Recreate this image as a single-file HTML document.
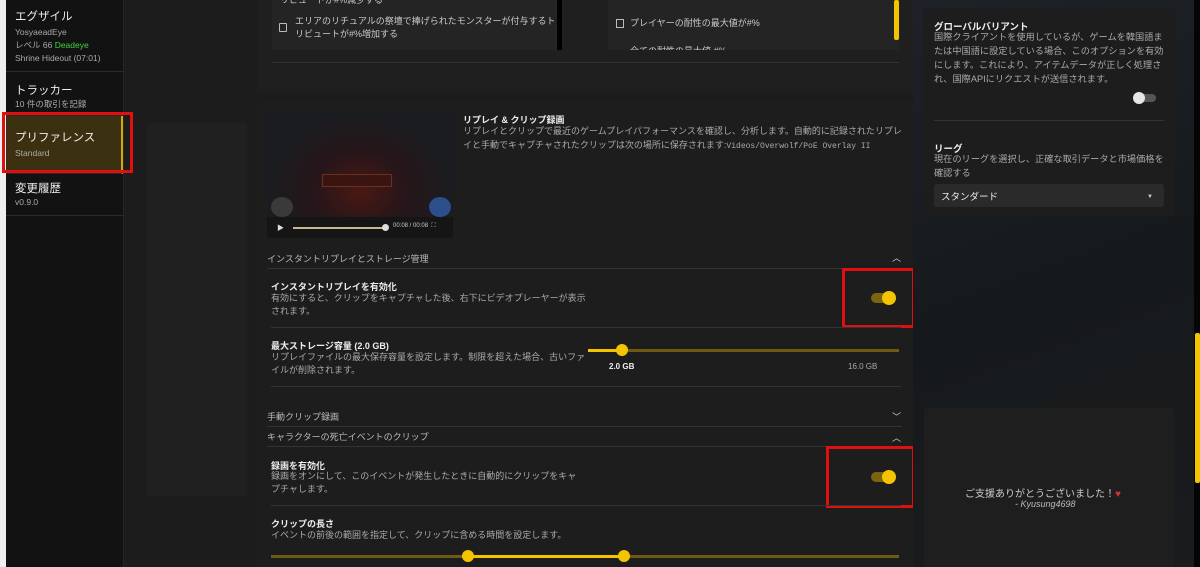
<!DOCTYPE html>
<html><head><meta charset="utf-8"><style>
*{box-sizing:border-box;margin:0;padding:0}
body{width:1200px;height:567px;overflow:hidden;background:#1c1c1c;font-family:"Liberation Sans","Noto Sans CJK JP",sans-serif;color:#ddd;position:relative}
.a{position:absolute}
.side{left:6px;top:0;width:118px;height:567px;background:#121212;border-right:1px solid #262626}
.side .it{position:absolute;left:0;width:118px;border-bottom:1px solid #2a2a2a;padding-left:9px}
.side h3{font-size:11.5px;font-weight:normal;color:#eee}
.side p{font-size:8.5px;color:#aaa;line-height:13px}
.t{font-size:9px;font-weight:bold;color:#eee}
.d{font-size:9px;color:#aaa;line-height:13px}
.tog{position:absolute;width:22px;height:10px;border-radius:5px;background:#7a6410}
.tog i{position:absolute;right:-3px;top:-2px;width:14px;height:14px;border-radius:50%;background:#f5c400}
.red{position:absolute;border:3px solid #e01010}
.sec{font-size:9px;color:#bbb}
.hr{position:absolute;height:1px;background:#333}
.chev{position:absolute;font-size:9px;color:#ccc}
</style></head><body>
<div class="a" style="left:0;top:0;width:6px;height:567px;background:#f0f0f0"></div>
<div class="a side">
 <div class="it" style="top:0;height:72px;padding-top:8px"><h3>エグザイル</h3><p style="margin-top:2px">YosyaeadEye<br>レベル 66 <span style="color:#3fd13f">Deadeye</span><br>Shrine Hideout (07:01)</p></div>
 <div class="it" style="top:72px;height:44px;padding-top:10px"><h3>トラッカー</h3><p>10 件の取引を記録</p></div>
 <div class="it" style="top:116px;height:58px;padding-top:13px;background:#3b3110;border-right:2px solid #d4a800;width:117px"><h3>プリファレンス</h3><p style="margin-top:2px">Standard</p></div>
 <div class="it" style="top:174px;height:42px;padding-top:6px"><h3>変更履歴</h3><p>v0.9.0</p></div>
</div>
<div class="red" style="left:2px;top:112px;width:131px;height:61px"></div>
<div class="a" style="left:147px;top:123px;width:100px;height:373px;background:#202020;border-radius:3px"></div>
<!-- main -->
<div class="a" style="left:257px;top:0;width:656px;height:91px;background:#1f1f1f"></div>
<div class="a" style="left:272px;top:0;width:290px;height:50px;background:#242424"></div>
<div class="a" style="left:557px;top:0;width:5px;height:50px;background:#000"></div>
<div class="a d" style="left:280px;top:-6px;color:#ccc">リビュートが#%減少する</div>
<div class="a" style="left:279px;top:23px;width:8px;height:9px;border:1px solid #bbb;border-radius:1px"></div>
<div class="a d" style="left:295px;top:15px;color:#ccc;width:270px">エリアのリチュアルの祭壇で捧げられたモンスターが付与するト<br>リビュートが#%増加する</div>
<div class="a" style="left:608px;top:0;width:291px;height:50px;background:#242424;overflow:hidden">
 <div class="a" style="left:8px;top:19px;width:8px;height:9px;border:1px solid #bbb"></div>
 <div class="a d" style="left:22px;top:17px;color:#ccc">プレイヤーの耐性の最大値が#%</div>
 <div class="a d" style="left:22px;top:45px;color:#ccc">全ての耐性の最大値 #%</div>
</div>
<div class="a" style="left:894px;top:0;width:5px;height:40px;background:#f5c400;border-radius:2px"></div>
<div class="hr" style="left:272px;top:62px;width:627px"></div>
<div class="a" style="left:257px;top:100px;width:656px;height:467px;background:#1d1d1d"></div>
<div class="a" style="left:267px;top:111px;width:186px;height:127px;background:#151515;border-radius:2px;overflow:hidden">
 <div class="a" style="left:0;top:0;width:186px;height:106px;background:radial-gradient(ellipse at 50% 75%,#4a1812 0%,#26161a 35%,#1a1c20 70%)"></div>
 <div class="a" style="left:55px;top:63px;width:70px;height:13px;background:#3a1410;border:1px solid #6a3020"></div>
 <div class="a" style="left:4px;top:86px;width:22px;height:20px;border-radius:50%;background:#3a3a3a"></div>
 <div class="a" style="left:162px;top:86px;width:22px;height:20px;border-radius:50%;background:#2b4f8a"></div>
 <div class="a" style="left:10px;top:112px;font-size:7px;color:#ddd">▶</div>
 <div class="a" style="left:26px;top:116px;width:92px;height:2px;background:#c8b890"></div>
 <div class="a" style="left:115px;top:113px;width:7px;height:7px;border-radius:50%;background:#ddd"></div>
 <div class="a" style="left:126px;top:112px;font-size:6px;color:#ccc">00:08 / 00:08 &nbsp;⛶</div>
</div>
<div class="a t" style="left:463px;top:113px">リプレイ &amp; クリップ録画</div>
<div class="a d" style="left:463px;top:124px;width:445px;line-height:14px">リプレイとクリップで最近のゲームプレイパフォーマンスを確認し、分析します。自動的に記録されたリプレイと手動でキャプチャされたクリップは次の場所に保存されます:<span style="font-family:'Liberation Mono',monospace;font-size:8px">Videos/Overwolf/PoE Overlay II</span></div>
<div class="a sec" style="left:267px;top:252px">インスタントリプレイとストレージ管理</div>
<div class="chev" style="left:892px;top:251px">︿</div>
<div class="hr" style="left:267px;top:268px;width:635px"></div>
<div class="a t" style="left:271px;top:280px">インスタントリプレイを有効化</div>
<div class="a d" style="left:271px;top:292px;width:320px">有効にすると、クリップをキャプチャした後、右下にビデオプレーヤーが表示されます。</div>
<div class="tog" style="left:871px;top:293px"><i></i></div>
<div class="red" style="left:842px;top:268px;width:73px;height:60px"></div>
<div class="hr" style="left:271px;top:327px;width:630px"></div>
<div class="a t" style="left:271px;top:339px">最大ストレージ容量 (2.0 GB)</div>
<div class="a d" style="left:271px;top:351px;width:318px">リプレイファイルの最大保存容量を設定します。制限を超えた場合、古いファイルが削除されます。</div>
<div class="a" style="left:588px;top:349px;width:311px;height:3px;background:#6e5a10"></div>
<div class="a" style="left:588px;top:349px;width:34px;height:3px;background:#f5c400"></div>
<div class="a" style="left:616px;top:344px;width:12px;height:12px;border-radius:50%;background:#f5c400"></div>
<div class="a d" style="left:609px;top:360px;color:#eee;font-weight:bold;font-size:8px">2.0 GB</div>
<div class="a d" style="left:848px;top:360px;font-size:8px">16.0 GB</div>
<div class="hr" style="left:271px;top:386px;width:630px"></div>
<div class="a sec" style="left:267px;top:410px">手動クリップ録画</div>
<div class="chev" style="left:892px;top:410px">﹀</div>
<div class="hr" style="left:267px;top:426px;width:635px"></div>
<div class="a sec" style="left:267px;top:430px">キャラクターの死亡イベントのクリップ</div>
<div class="chev" style="left:892px;top:431px">︿</div>
<div class="hr" style="left:267px;top:446px;width:635px"></div>
<div class="a t" style="left:271px;top:459px">録画を有効化</div>
<div class="a d" style="left:271px;top:470px;width:314px">録画をオンにして、このイベントが発生したときに自動的にクリップをキャプチャします。</div>
<div class="tog" style="left:871px;top:472px"><i></i></div>
<div class="red" style="left:826px;top:446px;width:89px;height:62px"></div>
<div class="hr" style="left:271px;top:505px;width:630px"></div>
<div class="a t" style="left:271px;top:517px">クリップの長さ</div>
<div class="a d" style="left:271px;top:529px">イベントの前後の範囲を指定して、クリップに含める時間を設定します。</div>
<div class="a" style="left:271px;top:555px;width:628px;height:3px;background:#6e5a10"></div>
<div class="a" style="left:468px;top:555px;width:156px;height:3px;background:#f5c400"></div>
<div class="a" style="left:462px;top:550px;width:12px;height:12px;border-radius:50%;background:#f5c400"></div>
<div class="a" style="left:618px;top:550px;width:12px;height:12px;border-radius:50%;background:#f5c400"></div>
<!-- right -->
<div class="a" style="left:913px;top:0;width:282px;height:567px;background:linear-gradient(160deg,#1e2228,#16191c 50%,#1a1b1d)"></div>
<div class="a" style="left:923px;top:8px;width:252px;height:208px;background:#1d1d1d;border-radius:3px"></div>
<div class="a t" style="left:934px;top:19px;font-size:9.5px">グローバルバリアント</div>
<div class="a d" style="left:934px;top:30px;width:234px;line-height:14px;font-size:9.2px">国際クライアントを使用しているが、ゲームを韓国語または中国語に設定している場合、このオプションを有効にします。これにより、アイテムデータが正しく処理され、国際APIにリクエストが送信されます。</div>
<div class="a" style="left:1136px;top:94px;width:20px;height:8px;border-radius:4px;background:#555"></div>
<div class="a" style="left:1133px;top:92px;width:12px;height:12px;border-radius:50%;background:#e6e6e6"></div>
<div class="hr" style="left:934px;top:120px;width:230px"></div>
<div class="a t" style="left:934px;top:141px;font-size:9.5px">リーグ</div>
<div class="a d" style="left:934px;top:152px;width:234px;line-height:14px;font-size:9.2px">現在のリーグを選択し、正確な取引データと市場価格を確認する</div>
<div class="a" style="left:934px;top:184px;width:230px;height:23px;background:#2a2a2a;border-radius:3px"></div>
<div class="a" style="left:941px;top:189px;font-size:9.5px;color:#eee">スタンダード</div>
<div class="a" style="left:1147px;top:194px;font-size:6px;color:#ccc">▼</div>
<div class="a" style="left:924px;top:408px;width:250px;height:159px;background:#1e1e1e;border-radius:3px"></div>
<div class="a" style="left:965px;top:485px;font-size:10px;color:#ccc">ご支援ありがとうございました！<span style="color:#c33">♥</span></div>
<div class="a" style="left:1015px;top:499px;font-size:9px;color:#bbb;font-style:italic">- Kyusung4698</div>
<div class="a" style="left:1194px;top:0;width:6px;height:567px;background:#050505"></div>
<div class="a" style="left:1195px;top:333px;width:5px;height:150px;background:#f5c400;border-radius:2px"></div>
</body></html>
